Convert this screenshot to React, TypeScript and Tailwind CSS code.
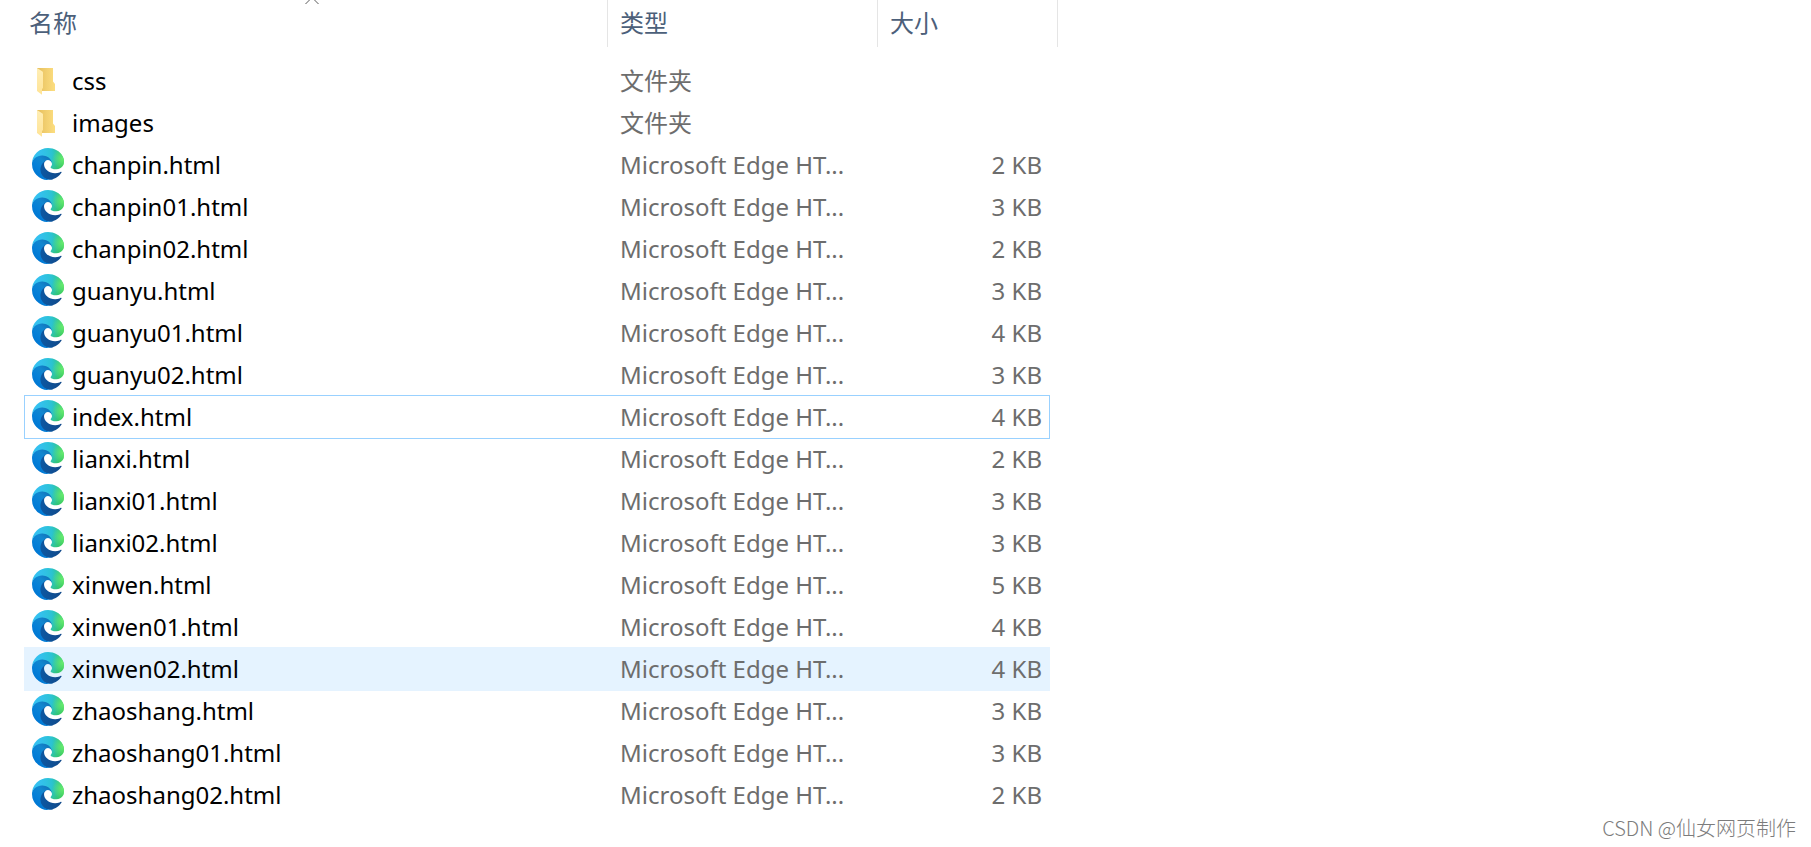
import React from 'react';

interface FileEntry {
  name: string;
  type: string;
  size?: string;
  state?: 'focused' | 'hovered';
}

const FOLDER = '文件夹';
const EDGE = 'Microsoft Edge HT...';

const files: FileEntry[] = [
  { name: 'css', type: FOLDER },
  { name: 'images', type: FOLDER },
  { name: 'chanpin.html', type: EDGE, size: '2 KB' },
  { name: 'chanpin01.html', type: EDGE, size: '3 KB' },
  { name: 'chanpin02.html', type: EDGE, size: '2 KB' },
  { name: 'guanyu.html', type: EDGE, size: '3 KB' },
  { name: 'guanyu01.html', type: EDGE, size: '4 KB' },
  { name: 'guanyu02.html', type: EDGE, size: '3 KB' },
  { name: 'index.html', type: EDGE, size: '4 KB', state: 'focused' },
  { name: 'lianxi.html', type: EDGE, size: '2 KB' },
  { name: 'lianxi01.html', type: EDGE, size: '3 KB' },
  { name: 'lianxi02.html', type: EDGE, size: '3 KB' },
  { name: 'xinwen.html', type: EDGE, size: '5 KB' },
  { name: 'xinwen01.html', type: EDGE, size: '4 KB' },
  { name: 'xinwen02.html', type: EDGE, size: '4 KB', state: 'hovered' },
  { name: 'zhaoshang.html', type: EDGE, size: '3 KB' },
  { name: 'zhaoshang01.html', type: EDGE, size: '3 KB' },
  { name: 'zhaoshang02.html', type: EDGE, size: '2 KB' },
];

const rowStates = {
  focused: 'outline outline-1 outline-[#99d1ff]',
  hovered: 'bg-[#e5f3ff] outline outline-1 outline-[#e5f3ff]',
};

// Shared gradients, referenced by every icon in the list
const IconDefs = () => (
  <svg className="absolute size-0" aria-hidden="true">
    <defs>
      <linearGradient id="edge-dark" x1="59" y1="177" x2="237" y2="177" gradientUnits="userSpaceOnUse">
        <stop offset="0" stopColor="#0c59a4" />
        <stop offset="1" stopColor="#114a8b" />
      </linearGradient>
      <linearGradient id="edge-blue" x1="153" y1="100" x2="41" y2="221" gradientUnits="userSpaceOnUse">
        <stop offset="0" stopColor="#1277bd" />
        <stop offset="0.3" stopColor="#1187d0" />
        <stop offset="0.67" stopColor="#0680d7" />
        <stop offset="1" stopColor="#0078d4" />
      </linearGradient>
      <radialGradient id="edge-teal" cx="26" cy="50" r="250" gradientUnits="userSpaceOnUse">
        <stop offset="0" stopColor="#35c1f1" />
        <stop offset="0.2" stopColor="#34c1ed" />
        <stop offset="0.4" stopColor="#2fc2df" />
        <stop offset="0.55" stopColor="#2bc3d2" />
        <stop offset="1" stopColor="#36c752" />
      </radialGradient>
      <radialGradient id="edge-green" cx="250" cy="90" r="84" gradientUnits="userSpaceOnUse">
        <stop offset="0" stopColor="#66eb6e" />
        <stop offset="1" stopColor="#66eb6e" stopOpacity="0" />
      </radialGradient>
      <linearGradient id="folder-back" x1="5" y1="0" x2="22" y2="0" gradientUnits="userSpaceOnUse">
        <stop offset="0" stopColor="#e5bd5c" />
        <stop offset="0.4" stopColor="#efcb6b" />
        <stop offset="1" stopColor="#fbdc7e" />
      </linearGradient>
      <linearGradient id="folder-front" x1="5" y1="4" x2="11" y2="31" gradientUnits="userSpaceOnUse">
        <stop offset="0" stopColor="#ffeeb6" />
        <stop offset="1" stopColor="#ffe394" />
      </linearGradient>
    </defs>
  </svg>
);

const EDGE_TOP =
  'M156.94 153.78c-.81 1.05-3.3 2.5-3.3 5.66 0 2.61 1.7 5.12 4.72 7.23 14.38 10 41.49 8.68 41.56 8.68a59.56 59.56 0 0 0 30.27-8.35 61.38 61.38 0 0 0 30.43-52.88c.26-22.41-8-37.31-11.34-43.91C228.09 28.76 182.35 4.92 132.61 4.92a128 128 0 0 0-128 126.2c.48-36.54 36.8-66.05 80-66.05 3.5 0 23.46.34 42 10.07 16.34 8.58 24.9 18.94 30.85 29.21 6.18 10.67 7.28 24.15 7.28 29.52s-2.74 13.33-7.8 19.91Z';

const EdgeIcon = () => (
  <svg className="size-8 shrink-0" viewBox="0 0 256 256" aria-hidden="true">
    <g transform="translate(-4.63 -4.92)">
      <path
        fill="url(#edge-dark)"
        d="M235.68 195.46a93.73 93.73 0 0 1-10.54 4.71 101.87 101.87 0 0 1-35.9 6.46c-47.32 0-88.54-32.55-88.54-74.32A31.48 31.48 0 0 1 117.13 105c-42.8 1.8-53.8 46.4-53.8 72.53 0 73.88 68.09 81.37 82.76 81.37 7.91 0 19.84-2.3 27-4.56l1.31-.44a128.34 128.34 0 0 0 66.6-52.8 4 4 0 0 0-5.32-5.64Z"
      />
      <path
        fill="url(#edge-blue)"
        d="M110.34 246.34A79.2 79.2 0 0 1 87.6 225a80.72 80.72 0 0 1 29.53-120c3.12-1.47 8.45-4.13 15.54-4a32.35 32.35 0 0 1 25.69 13 31.88 31.88 0 0 1 6.36 18.66c0-.21 24.46-79.6-80-79.6-43.9 0-80 41.66-80 78.21a130.15 130.15 0 0 0 12.11 56 128 128 0 0 0 156.38 67.11 75.55 75.55 0 0 1-62.78-8Z"
      />
      <path fill="url(#edge-teal)" d={EDGE_TOP} />
      <path fill="url(#edge-green)" d={EDGE_TOP} />
    </g>
  </svg>
);

const FolderIcon = () => (
  <svg className="size-8 shrink-0" viewBox="0 0 32 32" aria-hidden="true">
    <path fill="url(#folder-back)" d="M5 4H21V17.5L23 20V27H5Z" />
    <path fill="url(#folder-front)" d="M5 4L10.5 7.6Q11 8 11 8.8V24L10 25V30.8L5.6 27.6Q5 27 5 26.2Z" />
  </svg>
);

const FileRow: React.FC<{ file: FileEntry }> = ({ file }) => (
  <tr
    className={`grid grid-cols-[583px_270px_171px] pt-1 pb-[5px] ${file.state ? rowStates[file.state] : ''}`}
  >
    <td className="flex items-start gap-2 pl-[7px] text-black">
      {file.type === FOLDER ? <FolderIcon /> : <EdgeIcon />}
      <span className="pt-px">{file.name}</span>
    </td>
    <td className="px-3 pt-px">{file.type}</td>
    <td className="px-[7px] pt-px text-right">{file.size}</td>
  </tr>
);

export default function App() {
  return (
    <main className="min-h-screen bg-white font-['Noto_Sans','Noto_Sans_CJK_SC',sans-serif] text-2xl leading-8 text-[#6d6d6d]">
      <IconDefs />
      <div className="pl-[17px]">
        <table className="block w-fit">
          <thead className="block text-[#4c607a]">
            <tr className="grid grid-cols-[591px_270px_180px]">
              <th className="relative border-r border-[#e5e5e5] pt-[7px] pb-2 pl-3 text-left font-normal">
                <svg
                  className="absolute top-0 left-1/2 h-1 w-4 -translate-x-1/2"
                  viewBox="0 0 16 4"
                  fill="none"
                  stroke="#5a5a5a"
                  aria-hidden="true"
                >
                  <path d="M1.5 4L8 -2.5L14.5 4" />
                </svg>
                <button type="button">名称</button>
              </th>
              <th className="border-r border-[#e5e5e5] pt-[7px] pb-2 pl-3 text-left font-normal">
                <button type="button">类型</button>
              </th>
              <th className="border-r border-[#e5e5e5] pt-[7px] pb-2 pl-3 text-left font-normal">
                <button type="button">大小</button>
              </th>
            </tr>
          </thead>
          <tbody className="block pt-[13px] pr-[9px] pl-2">
            {files.map((file) => (
              <FileRow key={file.name} file={file} />
            ))}
          </tbody>
        </table>
      </div>
      <footer className="pr-[15px] text-right font-['Noto_Sans_CJK_SC',sans-serif] text-xl leading-6 font-light text-[#7c7c7c]">
        CSDN @仙女网页制作
      </footer>
    </main>
  );
}
